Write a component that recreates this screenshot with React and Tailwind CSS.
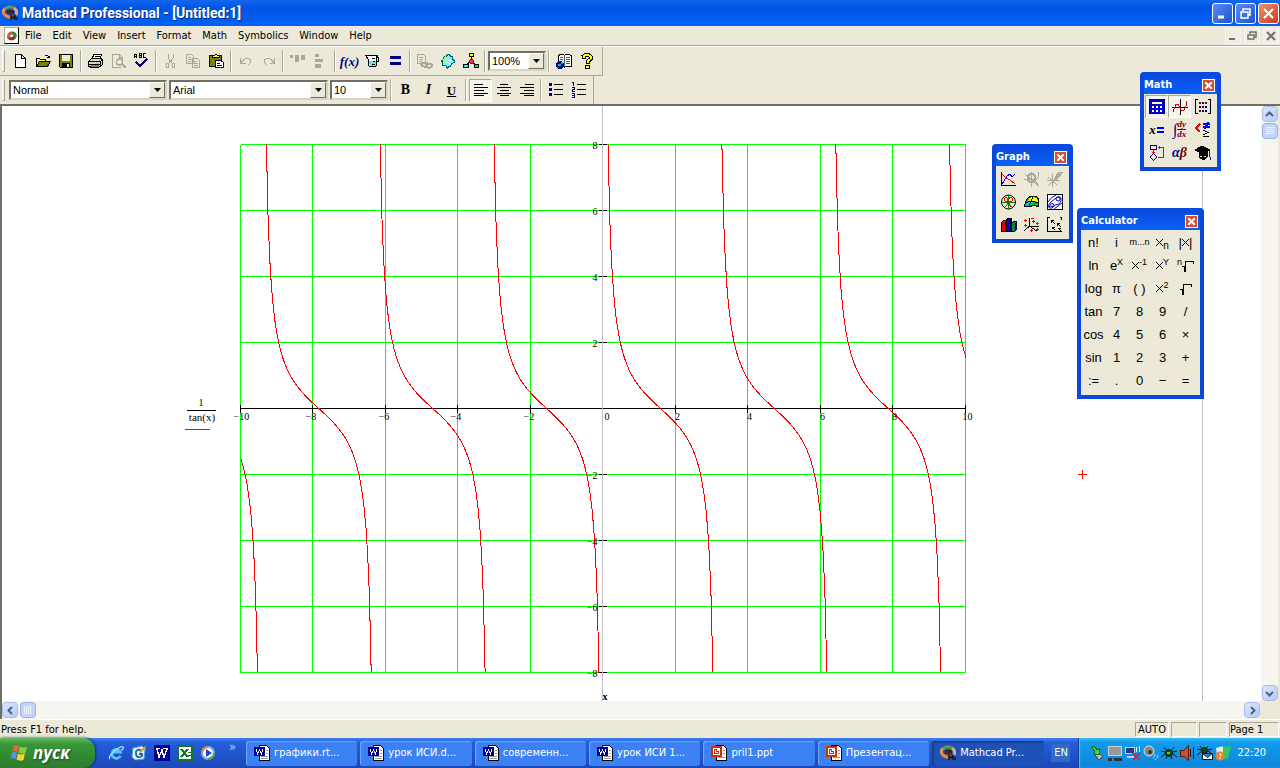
import { useState } from 'react';

const UI_FONT = "font-['DejaVu_Sans_Condensed','DejaVu_Sans',sans-serif]";

function Icon({ children, size = 16 }) {
  return (
    <svg width={size} height={size} viewBox="0 0 16 16" fill="none" stroke="#000" strokeWidth="1" shapeRendering="crispEdges" aria-hidden="true" className="shrink-0">
      {children}
    </svg>
  );
}

const G = '#aca899';

function MathcadLogo() {
  return (
    <svg width="16" height="16" viewBox="0 0 16 16" fill="none" aria-hidden="true" className="shrink-0">
      <path d="M5 5h7v4H5z" fill="#3a2418" />
      <path d="M2 9Q0 5 4 3" stroke="#e8935c" strokeWidth="3" />
      <path d="M3 4Q7 0 12 3" stroke="#5a9a58" strokeWidth="3" />
      <path d="M12 3Q16 6 14 10" stroke="#d8b080" strokeWidth="3" />
      <path d="M2 9Q5 13 11 12" stroke="#e88848" strokeWidth="3" />
      <path d="M4 7Q7 9 12 9" stroke="#5b2a14" strokeWidth="2" />
      <path d="M9 15V11l2 2 2-2v4M15 12v3" stroke="#141414" strokeWidth="1.5" />
    </svg>
  );
}

const icons = {
  new: <Icon><path d="M2.5 1.5h6l4 4v9h-10zM8.5 1.5v4h4" fill="#fff" /></Icon>,
  open: (
    <Icon>
      <path d="M0.5 13.5v-8h3l1 1h5v3" fill="#ffff66" />
      <path d="M0.5 13.5l3-5h11l-3 5z" fill="#808000" />
      <path d="M8.5 3.5q2-2 4 0v1M10.5 4.5h3v-2" />
    </Icon>
  ),
  save: (
    <Icon>
      <path d="M0.5 1.5h13v13h-12l-1-1z" fill="#808000" />
      <path d="M3 2h8v6H3z" fill="#ece9d8" stroke="none" />
      <path d="M3 10h8v5H3z" fill="#000" stroke="none" />
      <path d="M8 11h2v3H8z" fill="#ece9d8" stroke="none" />
    </Icon>
  ),
  print: (
    <Icon>
      <path d="M4.5 5.5l1-4h8l-2 5" fill="#fff" />
      <path d="M6.5 3.5h5M5.5 5.5h5" />
      <path d="M0.5 8.5l3-3h9l2 1v5l-2 2h-12z" fill="#ddd9c8" />
      <path d="M0 8.5h12v5M0 11.5h12M2 14.5h9M12.5 8.5l2-2" />
      <path d="M8 10h3" stroke="#e0d000" />
      <path d="M3 12h8v2H3z" fill="#777" stroke="none" />
    </Icon>
  ),
  preview: (
    <Icon>
      <path d="M1.5 14.5v-13h7l3 3v3M8.5 1.5v3h3M1.5 14.5h8" stroke={G} />
      <circle cx="8.5" cy="9" r="3" stroke={G} strokeWidth="1.5" />
      <path d="M11 11l4 4" stroke={G} strokeWidth="2" />
    </Icon>
  ),
  spell: (
    <Icon>
      <path d="M0.5 5V1.5h2V5M0 3.5h3M5.5 0v4.5h2v-4h-2M5 2.5h2M12 0.5H9.500v4H12" />
      <path d="M2 9l4 4 7-7" stroke="#000080" strokeWidth="2" />
    </Icon>
  ),
  cut: (
    <Icon>
      <path d="M5 1v4l5 6M10 1v4l-5 6" stroke={G} />
      <ellipse cx="4.5" cy="12.5" rx="1.5" ry="2" stroke={G} />
      <ellipse cx="10.5" cy="12.5" rx="1.5" ry="2" stroke={G} />
    </Icon>
  ),
  copy: (
    <Icon>
      <path d="M0.5 1.5h5l2 2v7h-7zM2 4.5h3M2 6.5h4M2 8.5h3M6.5 5.5h5l2 2v7h-7zM8 8.5h3M8 10.5h4M8 12.5h4" stroke={G} />
    </Icon>
  ),
  paste: (
    <Icon>
      <path d="M0.5 2.5h12v11h-12z" fill="#808000" />
      <path d="M3.5 4.5v-2h2l1-1h1l1 1h2v2z" fill="#ffff66" />
      <path d="M6.5 7.5h5l3 2v5h-8z" fill="#fff" stroke="#000080" />
      <path d="M8 10.5h3M8 12.5h5" stroke="#000080" />
    </Icon>
  ),
  undo: <Icon><path d="M2.5 5v5h5M3 9.5Q8 3 12 6.5q2 3-2 5.5" stroke={G} /></Icon>,
  redo: <Icon><path d="M13.5 5v5h-5M13 9.5Q8 3 4 6.5q-2 3 2 5.5" stroke={G} /></Icon>,
  alignAcross: <Icon><path d="M0 2h3v3H0zM5 2h4v7H5zM11 2h4v5h-4z" fill={G} stroke="none" /></Icon>,
  alignDown: <Icon><path d="M2 1h4v3H2zM2 6h8v3H2zM2 11h6v4H2z" fill={G} stroke="none" /></Icon>,
  units: (
    <Icon>
      <path d="M0.5 2.5h12l-1 2v8l-1 1h-6l-1-1v-6z" fill="#fff" />
      <path d="M4 8h7v4l-1 1H5z" fill="#5fe8e8" stroke="none" />
      <path d="M11.5 4.5h2v4h-2M7 5.5h3M8 8.5h2M7 11.5h3" />
    </Icon>
  ),
  equals: <Icon><path d="M2 3h11v3H2zM2 9h11v3H2z" fill="#000080" stroke="none" /></Icon>,
  link: (
    <Icon>
      <path d="M0.5 1.5h6l2 2v7h-8zM2 4.5h4M2 6.5h4M2 8.5h3" stroke={G} />
      <rect x="4.5" y="9.5" width="6" height="4" rx="2" stroke={G} strokeWidth="2" />
      <rect x="9" y="10.5" width="6" height="4" rx="2" stroke={G} strokeWidth="2" />
    </Icon>
  ),
  component: (
    <Icon>
      <path d="M3.5 3.5h3l1-2h2l1 2h2v3l2 1v2l-3 1-1 3h-2l-1 2-2-3h-3v-3l-1-2 2-1z" fill="#6ff" stroke="#006080" />
      <path d="M1 1l3 3M5 1v5M1 6h5M8 4l-3 3M3 8l2 2" stroke="#ffe000" />
      <path d="M8 7h4M9 10h2M7 9h2" stroke="#fff" />
    </Icon>
  ),
  tree: (
    <Icon>
      <path d="M8 4v4L3 12M8 8l5 4" />
      <rect x="6.5" y="0.5" width="4" height="3" fill="#ff0" />
      <circle cx="8.5" cy="8.5" r="2" fill="#f03050" stroke="#a00030" />
      <rect x="0.5" y="11.5" width="5" height="3" fill="#0ff" />
      <rect x="11.5" y="11.5" width="4" height="3" fill="#0f0" />
    </Icon>
  ),
  book: (
    <Icon>
      <path d="M2.5 2.5l2-1h3l1 1 1-1h3l3 1v11h-6l-1 1-1-1h-5z" fill="#fff" />
      <path d="M8.5 2v12M4 4.5h3M4 6.5h3M10 4.5h4M10 6.5h4M10 8.5h4M10 10.5h4" stroke="#555" />
      <circle cx="4" cy="12" r="3.5" fill="#0000d0" stroke="#000080" />
      <path d="M2 11h3v2H2zM5 9h2v2H5z" fill="#00d060" stroke="none" />
    </Icon>
  ),
  help: (
    <Icon>
      <path d="M4.5 6V3.5L6.500 2h3l2 1.500V6l-3 2.500V11" strokeWidth="4" />
      <path d="M4.5 5V3.5L6.500 2h3l2 1.500V6l-3 2.500V10" stroke="#ff0" strokeWidth="2" />
      <rect x="6.5" y="12.5" width="4" height="3" fill="#ff0" />
    </Icon>
  ),
  left: <Icon><path d="M1 2.5h9M1 5.5h14M1 8.5h10M1 11.5h14M1 13.5h10" /></Icon>,
  center: <Icon><path d="M4 2.5h8M1 5.5h14M4 8.5h9M1 11.5h14M4 13.5h9" /></Icon>,
  right: <Icon><path d="M6 2.5h9M1 5.5h14M5 8.5h10M1 11.5h14M5 13.5h10" /></Icon>,
  bullets: (
    <Icon>
      <path d="M1 1h3v3H1zM1 6h3v3H1zM1 11h3v3H1z" fill="#000080" stroke="none" />
      <path d="M6 2.5h9M6 7.5h9M6 12.5h9" />
    </Icon>
  ),
  numbers: (
    <Icon>
      <path d="M1 0.5h1.5V4M1 5.5h2.5v2h-2v2H4M1 11.5h2.5v4H1M1 13.5h2" stroke="#000080" />
      <path d="M6 2.5h9M6 7.5h9M6 12.5h9" />
    </Icon>
  ),
  calculator: (
    <Icon>
      <rect x="0.5" y="0.5" width="15" height="14" fill="#0000d8" stroke="#000080" />
      <path d="M3 3h10v2H3z" fill="#ffff80" stroke="none" />
      <path d="M3 7h2v2H3zM7 7h2v2H7zM11 7h2v2h-2zM3 11h2v2H3zM7 11h2v2H7zM11 11h2v2h-2z" fill="#fff" stroke="none" />
    </Icon>
  ),
  graph: (
    <Icon>
      <path d="M0 8.5h16M8.5 0v16" />
      <path d="M1 13l3-8h2l3 6h3l2-4V2" stroke="#e00000" />
    </Icon>
  ),
  matrix: (
    <Icon>
      <path d="M3 0.5H0.5v14H3M13 0.5h2.5v14H13" />
      <path d="M4 3h2v2H4zM10 3h2v2h-2zM7 7h2v2H7zM4 11h2v2H4z" fill="#800000" stroke="none" />
      <path d="M7 3h2v2H7zM4 7h2v2H4zM10 7h2v2h-2zM7 11h2v2H7zM10 11h2v2h-2z" fill="#000080" stroke="none" />
    </Icon>
  ),
  boolean: (
    <Icon>
      <path d="M5 2L1 6l4 4" stroke="#f00" strokeWidth="1.5" />
      <path d="M8 2h7M8 5h7M13 0l-3 7" stroke="#00f" strokeWidth="2" />
      <path d="M8 8l5 2.5L8 13M8 14.5h6" />
    </Icon>
  ),
  program: (
    <Icon>
      <rect x="1.5" y="0.5" width="6" height="4" stroke="#000080" />
      <path d="M4.5 8.5L8 12l-3.5 3.5L1 12z" stroke="#000080" />
      <path d="M4.5 5v3M9 12.5h5.5v-10H9M10.5 1v3M3 7.5h3" stroke="#f00" />
    </Icon>
  ),
  symbolic: (
    <Icon>
      <path d="M0 5l7-4 8 4-7 4z" fill="#000" />
      <path d="M4 8v4l3 2h3l2-2V8l-4 2z" fill="#000" />
      <path d="M5 11.5h2M9 11.5h2" stroke="#ece9d8" />
      <path d="M14.5 5v4l1 6" stroke="#00f" />
    </Icon>
  ),
  xyPlot: (
    <Icon>
      <path d="M0.5 1v13H15" />
      <path d="M1 13L6 5l3-2 2 3 3-3" stroke="#00f" />
      <path d="M1 3l4 4 4 2 5 4" stroke="#f00" />
    </Icon>
  ),
  zoom: (
    <Icon>
      <path d="M0 8.5h13M7.5 1v15M1 3l13 12" stroke={G} />
      <circle cx="7.5" cy="7" r="4" stroke={G} strokeWidth="2" />
      <path d="M14 1q2 5-3 9l4 5" stroke={G} />
    </Icon>
  ),
  trace: (
    <Icon>
      <path d="M0 9.5h13M5.5 3v13M1 6l9 8M10 6l-9 9" stroke={G} />
      <path d="M15 1L8 10M12 1l-4 7" stroke={G} strokeWidth="2" />
    </Icon>
  ),
  polar: (
    <Icon>
      <circle cx="7.5" cy="8" r="7" shapeRendering="auto" />
      <path d="M1 8.5h13M7.5 1v14" stroke="#008000" />
      <path d="M7 8Q2 8 4 4q3-2 3 4 1-6 4-4 2 4-4 4" stroke="#f00" />
      <path d="M7 8q-1 5-3 4M8 8q0 5 3 4" stroke="#f00" />
    </Icon>
  ),
  surface: (
    <Icon>
      <path d="M0 12l3-7 4-3 6 1 2 3-1 7-4-2-5 2z" fill="#00c000" />
      <path d="M5 4l3-1 5 1 1 4-4-1-6 1z" fill="#ff0" stroke="none" />
      <path d="M3 8l4-1 2 1-1 3-6 1z" fill="#00c8e0" stroke="none" />
      <path d="M2 9q5-3 12 0M5 13l4-11" />
    </Icon>
  ),
  contour: (
    <Icon>
      <rect x="0.5" y="0.5" width="15" height="15" fill="#fff" />
      <g stroke="#0000c0" shapeRendering="auto">
        <path d="M1 8Q4 3 9 1M1 12q1 3 4 2 3-4 7-4 3-3 2-6-2-3-5 0L4 8q-4 3-1 5M7 15l8-6" />
        <ellipse cx="11" cy="5" rx="2" ry="2" />
        <ellipse cx="5" cy="11" rx="2" ry="1.5" />
      </g>
    </Icon>
  ),
  bars: (
    <Icon>
      <path d="M0.5 5.5l2-2h3v11h-5z" fill="#f00000" />
      <path d="M5.5 2.5l2-1h3v13h-5z" fill="#0000f0" />
      <path d="M10.5 6.5l2-2h3v8l-2 2h-3z" fill="#008060" />
      <path d="M4.5 5v10M9.5 3v12M14.5 6v8" />
    </Icon>
  ),
  scatter: (
    <Icon>
      <path d="M5.5 1v8H15M5.5 9L0 14M5.5 9l7 5" />
      <path d="M0 3.5h3M1.5 2v3M8 4.5h3M9.5 3v3M12 6.5h3M13.5 5v3M0 8.5h3M1.5 7v3M6 13.5h3M7.5 12v3M7 1.5h3M12 12.5h3M13.5 11v3" stroke="#f00" />
    </Icon>
  ),
  vector: (
    <Icon>
      <path d="M0.5 0v14.5H15M0 0.5h3M13 0.5h1.5V3" />
      <path d="M4 3.5h3M4.5 3v3M4 3l4 4M10 6.5h3M10.5 6v3M10 6l4 4M5 10.5h3M5.5 10v2M5 10l3 3M11 11.5h3M11 11l3 3" />
    </Icon>
  ),
  ie: (
    <svg width="16" height="16" viewBox="0 0 18 18" fill="none" aria-hidden="true">
      <path d="M14 12a5 5 0 1 1 0-4H5" stroke="#58c4f8" strokeWidth="3" />
      <path d="M2 16Q0 13 7 7t10-5q1 2-2 4" stroke="#9ee4ff" strokeWidth="1.5" />
    </svg>
  ),
  desktop: (
    <svg width="16" height="16" viewBox="0 0 16 16" fill="none" aria-hidden="true">
      <path d="M2 3l9-2 3 3-1 10-9 1-3-3z" fill="#e6f2fb" stroke="#54a0d8" />
      <path d="M10 5Q4 4 5 9t6 2V9H8" stroke="#1470b8" strokeWidth="2" />
      <path d="M8 7l6-6 1 2-5 5z" fill="#f09a28" />
    </svg>
  ),
  player: (
    <svg width="16" height="16" viewBox="0 0 16 16" fill="none" aria-hidden="true">
      <circle cx="8" cy="8" r="6" fill="#f6f8ff" stroke="#8aa8e8" strokeWidth="2" />
      <path d="M2 8a6 6 0 0 1 6-6" stroke="#f08030" strokeWidth="2" />
      <path d="M8 14a6 6 0 0 0 6-6" stroke="#40b040" strokeWidth="2" />
      <path d="M6 4l6 4-6 4z" fill="#1b4bc0" />
    </svg>
  ),
  word: (
    <Icon>
      <rect width="16" height="16" fill="#000090" stroke="none" />
      <path d="M2 3.5h4M9 3.5h5M3 4l2 8 3-7 2 7 3-8" stroke="#fff" strokeWidth="1.5" />
    </Icon>
  ),
  excel: (
    <Icon>
      <rect width="16" height="16" fill="#107828" stroke="none" />
      <rect x="2" y="2" width="12" height="12" fill="#fff" stroke="none" />
      <path d="M4 4l7 8M11 4l-7 8" stroke="#107828" strokeWidth="2" />
      <path d="M11 7.5h3M11 10.5h3" stroke="#107828" />
    </Icon>
  ),
  wordDoc: (
    <Icon>
      <path d="M5.5 0.5h7l3 3v12h-10z" fill="#fff" />
      <path d="M7 11.5h7M7 13.5h7M12 5.5h2M12 8.5h2" stroke="#999" />
      <rect y="2" width="11" height="9" fill="#000090" stroke="none" />
      <path d="M2 4l1.5 5 2-4 2 4L9 4" stroke="#fff" />
    </Icon>
  ),
  pptDoc: (
    <Icon>
      <path d="M5.5 0.5h7l3 3v12h-10z" fill="#fff" />
      <path d="M7 12.5h7M12 5.5h2M12 8.5h2" stroke="#999" />
      <rect x="1" y="2" width="9" height="9" fill="#fff" stroke="#d03000" strokeWidth="2" />
      <path d="M5.5 4.5h-2v4h4v-2h-2z" stroke="#d03000" />
    </Icon>
  ),
  mathcad: <MathcadLogo />,
};

const textIcons = {
  fx: <span className="font-['Liberation_Serif',serif] text-[13px] font-bold italic text-[#000080]">f(x)</span>,
  bold: <span className="font-['Liberation_Serif',serif] text-[14px] font-black">B</span>,
  italic: <span className="font-['Liberation_Serif',serif] text-[14px] font-bold italic">I</span>,
  underline: <span className="font-['Liberation_Serif',serif] text-[13px] font-bold underline underline-offset-1">U</span>,
  evaluate: (
    <span className="flex items-center gap-px font-['Liberation_Serif',serif] text-[13px] font-bold italic">
      x
      <svg width="7" height="6" viewBox="0 0 7 6" aria-hidden="true"><path d="M0 0h7v2H0zM0 4h7v2H0z" fill="#00f" /></svg>
    </span>
  ),
  greek: <span className="font-['Liberation_Serif',serif] text-[14px] font-bold italic text-[#000080]">α<span className="text-[#800000]">β</span></span>,
  calculus: (
    <span className="flex items-center font-['Liberation_Serif',serif] font-bold italic leading-none text-[#800000]">
      <span className="text-[16px] font-normal text-[#000080]">∫</span>
      <span className="flex flex-col text-[9px] leading-none">
        <span className="border-b border-[#800000]">dy</span>
        <span>dx</span>
      </span>
    </span>
  ),
};

function ToolButton({ name, label, pressed }) {
  return (
    <button
      type="button"
      aria-label={label}
      className={`flex size-[23px] shrink-0 items-center justify-center leading-none ${pressed ? 'border border-b-white border-l-[#aca899] border-r-white border-t-[#aca899] bg-[#f6f4ec]' : ''}`}
    >
      {icons[name] || textIcons[name]}
    </button>
  );
}

const Separator = () => <span className="mx-0.5 h-[22px] w-0.5 shrink-0 border-l border-r border-l-[#aca899] border-r-white" />;
const Grip = () => <span className="mr-1 h-[22px] w-[3px] shrink-0 border border-b-[#aca899] border-l-white border-r-[#aca899] border-t-white" />;

function Combo({ label, options, className }) {
  return (
    <div className={`flex h-5 shrink-0 border-2 border-b-[#d8d4c4] border-l-[#716f64] border-r-[#d8d4c4] border-t-[#716f64] bg-white ${className}`}>
      <select aria-label={label} className="min-w-0 flex-1 appearance-none bg-white pl-0.5 font-['Liberation_Sans',sans-serif] text-[11px] leading-4 outline-none">
        {options.map(o => <option key={o}>{o}</option>)}
      </select>
      <span className="flex w-4 items-center justify-center border border-b-[#716f64] border-l-white border-r-[#716f64] border-t-white bg-[#ece9d8]">
        <svg width="7" height="4" viewBox="0 0 7 4" aria-hidden="true"><path d="M0 0h7L3.5 4z" /></svg>
      </span>
    </div>
  );
}

const standardBar = [
  ['new', 'New'], ['open', 'Open'], ['save', 'Save'], null,
  ['print', 'Print'], ['preview', 'Print Preview'], ['spell', 'Check Spelling'], null,
  ['cut', 'Cut'], ['copy', 'Copy'], ['paste', 'Paste'], null,
  ['undo', 'Undo'], ['redo', 'Redo'], null,
  ['alignAcross', 'Align Across'], ['alignDown', 'Align Down'], null,
  ['fx', 'Insert Function'], ['units', 'Insert Unit'], ['equals', 'Calculate'], null,
  ['link', 'Insert Hyperlink'], ['component', 'Component Wizard'], ['tree', 'Run MathConnex'], null,
];

function WindowButton({ label, close, children }) {
  return (
    <button type="button" aria-label={label} className={`flex size-[21px] items-center justify-center rounded-[3px] border border-white ${close ? 'bg-linear-to-br from-[#f0906c] to-[#c83814]' : 'bg-linear-to-br from-[#5c8cf4] to-[#1c50d0]'}`}>
      <svg width="13" height="13" viewBox="0 0 13 13" fill="none" stroke="#fff" strokeWidth="2" aria-hidden="true">{children}</svg>
    </button>
  );
}

function TitleBar() {
  return (
    <header className="flex h-[26px] shrink-0 items-center bg-linear-to-b from-[#1468ee] via-[#0054e3] via-30% to-[#0062fa] pl-0.5 pr-px">
      <MathcadLogo />
      <h1 className="ml-1 flex-1 truncate font-['Roboto','Open_Sans',sans-serif] text-[14px] font-bold leading-5 text-white [text-shadow:1px_1px_#0a2a80]">Mathcad Professional - [Untitled:1]</h1>
      <div className="flex gap-0.5">
        <WindowButton label="Minimize"><path d="M2 10h6" strokeWidth="3" /></WindowButton>
        <WindowButton label="Restore"><path d="M4 4V2h7v6H9M2 5h7v6H2z" strokeWidth="1.5" /></WindowButton>
        <WindowButton label="Close" close><path d="M2 2l9 9M11 2l-9 9" /></WindowButton>
      </div>
    </header>
  );
}

const menus = ['File', 'Edit', 'View', 'Insert', 'Format', 'Math', 'Symbolics', 'Window', 'Help'];

function MdiButton({ label, children }) {
  return (
    <button type="button" aria-label={label} className="flex size-4 items-center justify-center border border-[#f8f6ee] bg-[#f0eee2]">
      <svg width="10" height="10" viewBox="0 0 10 10" fill="none" stroke="#716f64" strokeWidth="2" aria-hidden="true">{children}</svg>
    </button>
  );
}

function MenuBar() {
  return (
    <nav className="flex h-5 shrink-0 items-center border-b border-[#aca899] pl-1 pr-px">
      <span className="flex h-[17px] w-[15px] items-center justify-center border border-b-black border-l-[#aca899] border-r-black border-t-[#aca899] bg-white">
        <svg width="10" height="10" viewBox="0 0 16 16" fill="none" strokeWidth="5" aria-hidden="true">
          <path d="M3 12Q1 4 8 3" stroke="#d8602c" />
          <path d="M8 3q6 1 5 6" stroke="#3f7a48" />
          <path d="M3 11q5 4 10-2" stroke="#70402c" />
        </svg>
      </span>
      {menus.map(m => (
        <button key={m} type="button" className="pl-[6px] pr-[5px] text-[11px] leading-4">{m}</button>
      ))}
      <div className="ml-auto flex gap-[3px]">
        <MdiButton label="Minimize document"><path d="M1 8h6" /></MdiButton>
        <MdiButton label="Restore document"><path d="M3 3V1h6v5H7M1 4h6v4H1z" strokeWidth="1.5" /></MdiButton>
        <MdiButton label="Close document"><path d="M1 1l8 8M9 1L1 9" /></MdiButton>
      </div>
    </nav>
  );
}

function Toolbars() {
  return (
    <div className="shrink-0 border-b-2 border-b-[#716f64] border-t border-t-white">
      <div className="flex h-[29px] w-fit items-center border-b border-r border-[#aca899] pl-0.5">
        <Grip />
        {standardBar.map((b, i) => (b ? <ToolButton key={b[0]} name={b[0]} label={b[1]} /> : <Separator key={i} />))}
        <Combo label="Zoom" options={['100%', '75%', '50%']} className="w-[58px]" />
        <Separator />
        <ToolButton name="book" label="Resource Center" />
        <ToolButton name="help" label="Help" />
        <span className="w-1" />
      </div>
      <div className="flex h-7 w-fit items-center border-r border-[#aca899] pl-0.5">
        <Grip />
        <div className="flex gap-0.5">
          <Combo label="Style" options={['Normal', 'Title']} className="w-[158px]" />
          <Combo label="Font" options={['Arial', 'Times New Roman']} className="w-[159px]" />
          <Combo label="Font size" options={['10', '12', '14']} className="w-[58px]" />
        </div>
        <Separator />
        <ToolButton name="bold" label="Bold" />
        <ToolButton name="italic" label="Italic" />
        <ToolButton name="underline" label="Underline" />
        <Separator />
        <ToolButton name="left" label="Align Left" pressed />
        <ToolButton name="center" label="Center" />
        <ToolButton name="right" label="Align Right" />
        <Separator />
        <ToolButton name="bullets" label="Bullets" />
        <ToolButton name="numbers" label="Numbering" />
        <span className="w-[3px]" />
      </div>
    </div>
  );
}

// plot geometry
const CX = 420.5;
const CY = 271.5;
const UX = 36.25;
const UY = 33;
const px = x => Math.floor(CX + x * UX) + 0.5;
const py = y => CY - y * UY;

function cotangentPath() {
  let d = '';
  for (let n = -4; n <= 3; n++) {
    const start = Math.max(-10, n * Math.PI + Math.atan(1 / 8));
    const end = Math.min(10, (n + 1) * Math.PI - Math.atan(1 / 8));
    if (end <= start) continue;
    for (let i = 0; i <= 60; i++) {
      const x = start + ((end - start) * i) / 60;
      d += `${i ? 'L' : 'M'}${Math.min(px(10), CX + 1 + x * UX).toFixed(1)} ${py(1 / Math.tan(x)).toFixed(1)}`;
    }
  }
  return d;
}

const xTicks = [-10, -8, -6, -4, -2, 2, 4, 6, 8, 10];
const yTicks = [-8, -6, -4, -2, 2, 4, 6, 8];

function Plot() {
  return (
    <svg width="800" height="564" viewBox="0 0 800 564" fill="none" shapeRendering="crispEdges" role="img" aria-label="Graph of 1/tan(x)" className="absolute left-[180px] top-[31px]">
      <g stroke="#00ff00">
        {xTicks.map(x => <path key={x} d={`M${px(x)} ${py(8)}V${py(-8)}`} />)}
        {yTicks.map(y => <path key={y} d={`M${px(-10)} ${py(y)}H${px(10)}`} />)}
      </g>
      <path d={`M${px(-10)} ${CY}H${px(10)}`} stroke="#000" />
      <g stroke="#000">
        {xTicks.map(x => <path key={x} d={`M${px(x)} ${CY - 4}v8`} />)}
        {yTicks.map(y => <path key={y} d={`M${CX - 4} ${py(y)}h8`} />)}
        <path d={`M${CX - 4} ${CY}h8`} />
      </g>
      <path d={`M${CX} 0V564`} stroke="#c0c0c0" />
      <path d={cotangentPath()} stroke="#ff0000" />
      <g fill="#000" className="font-['Liberation_Serif',serif] text-[10px]" shapeRendering="auto">
        {xTicks.map(x => (
          <text key={x} x={px(x) + (x < 0 ? -7 : 2)} y={CY + 11} textAnchor={x < 0 ? 'start' : 'middle'}>{String(x).replace('-', '−')}</text>
        ))}
        <text x={CX + 2} y={CY + 11}>0</text>
        {yTicks.map(y => <text key={y} x={CX - 5} y={py(y) + 4} textAnchor="end">{String(y).replace('-', '−')}</text>)}
        <text x={CX} y="563" className="font-bold">x</text>
        <text x="19" y="269" textAnchor="middle">1</text>
        <text x="20" y="284" textAnchor="middle" className="text-[11px]">tan(x)</text>
      </g>
      <path d="M5 273.5h29" stroke="#000" />
      <path d="M3 292.5h25" stroke="#ff0000" />
    </svg>
  );
}

function ScrollButton({ label, d }) {
  return (
    <button type="button" aria-label={label} className="flex size-4 shrink-0 items-center justify-center rounded-sm border border-[#a8bcf0] bg-linear-to-br from-[#dce6ff] to-[#b6caf8]">
      <svg width="9" height="9" viewBox="0 0 9 9" fill="none" stroke="#4d6185" strokeWidth="2" aria-hidden="true"><path d={d} /></svg>
    </button>
  );
}

function ScrollThumb({ d }) {
  return (
    <span className="flex size-4 shrink-0 items-center justify-center rounded-sm border border-[#98b0e8] bg-[#c4d4fc]">
      <svg width="8" height="8" viewBox="0 0 8 8" stroke="#eef4fe" shapeRendering="crispEdges" aria-hidden="true"><path d={d} /></svg>
    </span>
  );
}

function Worksheet() {
  return (
    <main className="flex min-h-0 flex-1 flex-col border-l-2 border-[#716f64]">
      <div className="flex min-h-0 flex-1">
        <div className="relative min-w-0 flex-1 overflow-hidden bg-white">
          <span className="absolute inset-y-0 left-[600px] w-px bg-[#c0c0c0]" />
          <span className="absolute inset-y-0 left-[1200px] w-px bg-[#c0c0c0]" />
          <Plot />
          <svg width="9" height="9" viewBox="0 0 9 9" stroke="#f00" shapeRendering="crispEdges" className="absolute left-[1076px] top-[364px]" aria-hidden="true"><path d="M0 4.5h9M4.5 0v9" /></svg>
        </div>
        <div className="flex w-[17px] flex-col items-center gap-px bg-[#f6f5f0]">
          <ScrollButton label="Scroll up" d="M1 6l3.5-3.5L8 6" />
          <ScrollThumb d="M0 0.5h8M0 2.5h8M0 4.5h8M0 6.5h8" />
          <span className="flex-1" />
          <ScrollButton label="Scroll down" d="M1 3l3.5 3.5L8 3" />
        </div>
        <span className="w-0.5" />
      </div>
      <div className="flex h-[18px] shrink-0 items-center">
        <div className="flex h-full flex-1 items-center gap-0.5 bg-[#f6f5f0]">
          <ScrollButton label="Scroll left" d="M6 1L2.5 4.5 6 8" />
          <ScrollThumb d="M0.5 0v8M2.5 0v8M4.5 0v8M6.5 0v8" />
          <span className="flex-1" />
          <ScrollButton label="Scroll right" d="M3 1l3.5 3.5L3 8" />
        </div>
        <span className="w-5" />
      </div>
    </main>
  );
}

function Palette({ title, className, gridClass, children }) {
  const [open, setOpen] = useState(true);
  if (!open) return null;
  return (
    <section className={`absolute rounded-t-sm border-x-4 border-b-4 border-[#0a48dc] bg-[#ece9d8] ${className}`}>
      <div className="flex h-[22px] items-center justify-between bg-linear-to-b from-[#0a48dc] to-[#0a60f8] pt-1">
        <h2 className="text-[11px] font-bold leading-4 text-white">{title}</h2>
        <button type="button" aria-label={`Close ${title}`} onClick={() => setOpen(false)} className="mr-0.5 flex size-[13px] items-center justify-center border border-white bg-[#dc5030]">
          <svg width="7" height="7" viewBox="0 0 7 7" stroke="#fff" strokeWidth="2" aria-hidden="true"><path d="M0 0l7 7M7 0L0 7" /></svg>
        </button>
      </div>
      <div className={`grid pb-[3px] pl-px pr-[3px] pt-px ${gridClass}`}>{children}</div>
    </section>
  );
}

const mathTools = [
  ['calculator', 'Calculator', true], ['graph', 'Graph', true], ['matrix', 'Matrix'],
  ['evaluate', 'Evaluation'], ['calculus', 'Calculus'], ['boolean', 'Boolean'],
  ['program', 'Programming'], ['greek', 'Greek'], ['symbolic', 'Symbolic'],
];

const graphTools = [
  ['xyPlot', 'X-Y Plot'], ['zoom', 'Zoom'], ['trace', 'Trace'],
  ['polar', 'Polar Plot'], ['surface', 'Surface Plot'], ['contour', 'Contour Plot'],
  ['bars', '3D Bar Plot'], ['scatter', '3D Scatter Plot'], ['vector', 'Vector Field Plot'],
];

const Sup = ({ children }) => <span className="self-start text-[9px] leading-[8px]">{children}</span>;
const Sub = ({ children }) => <span className="self-end text-[10px] leading-[8px]">{children}</span>;
const Root = () => <svg width="12" height="12" viewBox="0 0 12 12" fill="none" stroke="#000" shapeRendering="crispEdges" aria-hidden="true"><path d="M0 6.5h2.5v5h1V1.5h8V4" /></svg>;
const X = () => <svg width="7" height="7" viewBox="0 0 7 7" stroke="#000" aria-hidden="true"><path d="M0 0l7 7M7 0L0 7" /></svg>;

const calcKeys = [
  ['factorial', 'n!'], ['imaginary', 'i'], ['range', <span className="text-[9px]">m...n</span>], ['subscript', <><X /><Sub>n</Sub></>], ['absolute', <>|<X />|</>],
  ['ln', 'ln'], ['exp', <>e<Sup>X</Sup></>], ['inverse', <><X /><Sup>-1</Sup></>], ['power', <><X /><Sup>Y</Sup></>], ['nth root', <><Sup>n</Sup><Root /></>],
  ['log', 'log'], ['pi', 'π'], ['parentheses', '( )'], ['square', <><X /><Sup>2</Sup></>], ['square root', <Root />],
  ['tan', 'tan'], ['7', '7'], ['8', '8'], ['9', '9'], ['divide', '/'],
  ['cos', 'cos'], ['4', '4'], ['5', '5'], ['6', '6'], ['multiply', '×'],
  ['sin', 'sin'], ['1', '1'], ['2', '2'], ['3', '3'], ['plus', '+'],
  ['define', ':='], ['point', '.'], ['0', '0'], ['minus', '−'], ['equals', '='],
];

function StatusBar() {
  const cell = 'h-[15px] border border-b-white border-l-[#aca899] border-r-white border-t-[#aca899]';
  return (
    <footer className="flex h-[19px] shrink-0 items-center gap-0.5 border-t border-white pl-px pr-px pt-px text-[11px] leading-[14px]">
      <span className="flex-1">Press F1 for help.</span>
      <span className={`${cell} w-[34px] text-center`}>AUTO</span>
      <span className={`${cell} w-[26px]`} />
      <span className={`${cell} w-7`} />
      <span className={`${cell} w-[50px]`}>Page 1</span>
    </footer>
  );
}

const quickLaunch = [['ie', 'Internet Explorer'], ['desktop', 'Outlook Express'], ['word', 'Word'], ['excel', 'Excel'], ['player', 'Media Player']];

const tasks = [
  ['wordDoc', 'графики.rt...'],
  ['wordDoc', 'урок ИСИ.d...'],
  ['wordDoc', 'современн...'],
  ['wordDoc', 'урок ИСИ 1...'],
  ['pptDoc', 'pril1.ppt'],
  ['pptDoc', 'Презентац...'],
  ['mathcad', 'Mathcad Pr...', true],
];

const trayIcons = [
  <Icon key="usb"><path d="M5 9l4-2 5 5-4 3z" fill="#b8bcc0" stroke="#555" /><path d="M2 1h3l3 4 2-1v5H5l1-2z" fill="#50d050" stroke="#187018" /></Icon>,
  <Icon key="display"><rect x="1.5" y="1.5" width="13" height="9" fill="#9a9a9a" stroke="#ccc" /><path d="M1 14h4M7 14h8" stroke="#333" strokeWidth="3" /></Icon>,
  <Icon key="network"><rect x="0.5" y="2.5" width="9" height="6" fill="#203880" stroke="#ccd" /><path d="M2 11.5h7" stroke="#ccd" strokeWidth="2" /><path d="M11.5 2v5M14.5 1v8" stroke="#dff" /><path d="M8 8l7 7M15 8l-7 7" stroke="#f02020" strokeWidth="2" /></Icon>,
  <svg key="speaker" width="16" height="16" viewBox="0 0 16 16" fill="none" aria-hidden="true"><circle cx="6" cy="6" r="5" fill="#888" stroke="#ddd" /><circle cx="7" cy="7" r="2" fill="#333" /><path d="M10 13q2-1 2-4M12 15q3-2 3-5" stroke="#a8d8ff" /></svg>,
  <svg key="bug" width="16" height="16" viewBox="0 0 16 16" fill="none" stroke="#101810" aria-hidden="true"><path d="M3 2l2 3M13 2l-2 3M0 6l4 1M16 6l-4 1M0 12l4-3M16 12l-4-3M5 14l1-3M11 14l-1-3" /><circle cx="8" cy="8" r="3.5" fill="#184818" /><path d="M6 7h3v2H6z" fill="#30e030" stroke="none" /></svg>,
  <Icon key="volume"><path d="M1 5h4l4-4v14l-4-4H1z" fill="#c85030" stroke="#601808" /><path d="M11.5 4v8M14.5 2v12" stroke="#401008" /></Icon>,
  <svg key="mail" width="16" height="16" viewBox="0 0 16 16" fill="none" stroke="#101810" aria-hidden="true"><path d="M3 1l2 3M11 1l-2 3M0 4l4 1M15 4l-4 1M0 10l4-3M14 8l-3-2" /><circle cx="7.5" cy="5.5" r="3" fill="#184818" /><path d="M5.5 8.5h10v6h-10zM5.5 8.5l5 4 5-4" fill="#fff" /></svg>,
  <svg key="update" width="16" height="16" viewBox="0 0 16 16" aria-hidden="true"><path d="M1 3l7-2v12l-6-2z" fill="#dcece8" /><path d="M8 2l8-1-3 12-5 2z" fill="#30c850" /><circle cx="5" cy="11" r="4.5" fill="#f08030" /><path d="M4 9h2v2H5M5 12v2" stroke="#fff" fill="none" /></svg>,
];

function Taskbar() {
  return (
    <div className="flex h-[30px] shrink-0 items-center bg-linear-to-b from-[#3c80f0] via-[#245edb] via-15% to-[#1c48b8] text-white">
      <button type="button" className="flex h-full w-[95px] items-center gap-1 rounded-r-xl bg-linear-to-b from-[#68b860] via-[#389838] via-20% to-[#2c7c2c] pl-2.5 shadow-[1px_0_3px_#10307c]">
        <svg width="19" height="18" viewBox="0 0 19 18" aria-hidden="true">
          <path d="M4 2q3-2 5 0L7.5 8q-3-2-5 0z" fill="#f06030" />
          <path d="M10 2.5q3 2 7 0L15.5 9q-3 1.5-7-0.5z" fill="#80d040" />
          <path d="M2 9q3-2 5 0l-1.5 6q-3-2-5 0z" fill="#5090f8" />
          <path d="M8 9.5q3 2 7 0L13.5 16q-3 1.5-7-0.5z" fill="#fcd030" />
        </svg>
        <span className="font-['Open_Sans','Noto_Sans',sans-serif] text-[17px] font-bold italic leading-6 [text-shadow:1px_1px_2px_#184818]">пуск</span>
      </button>
      <div className="flex items-center pl-[9px]">
        {quickLaunch.map(([icon, label]) => (
          <button key={icon} type="button" aria-label={label} className="flex size-[23px] items-center justify-center">{icons[icon]}</button>
        ))}
        <button type="button" aria-label="More" className="w-[27px] pb-3 text-[13px] leading-4 text-[#bcd4ff]">»</button>
      </div>
      <div className="flex min-w-0 flex-1 gap-[3px]">
        {tasks.map(([icon, label, active]) => (
          <button
            key={label}
            type="button"
            className={`flex h-[25px] min-w-0 max-w-[160px] flex-1 items-center gap-1 rounded-[3px] pl-2 text-[11px] leading-4 ${active ? 'bg-[#1e52b7] shadow-[inset_1px_1px_2px_#10306c]' : 'bg-[#3c81f3] shadow-[inset_1px_1px_1px_#70a8fc]'}`}
          >
            {icons[icon]}
            <span className="truncate">{label}</span>
          </button>
        ))}
      </div>
      <span className="mx-2 w-[19px] bg-[#316ac5] text-center text-[11px] leading-[18px]">EN</span>
      <div className="flex h-full items-center gap-0.5 border-l border-[#0a3c98] bg-linear-to-b from-[#30b8f8] via-[#129cec] via-15% to-[#0f84d8] pl-2.5 pr-3.5 shadow-[inset_1px_0_1px_#50c8ff]">
        {trayIcons}
        <time className="ml-1 text-[11px] leading-4">22:20</time>
      </div>
    </div>
  );
}

export default function App() {
  return (
    <div className={`relative flex h-screen flex-col overflow-hidden bg-[#ece9d8] text-black ${UI_FONT}`}>
      <TitleBar />
      <MenuBar />
      <Toolbars />
      <Worksheet />
      <StatusBar />
      <Taskbar />

      <Palette title="Math" className="left-[1140px] top-[72px]" gridClass="grid-cols-[repeat(3,23px)]">
        {mathTools.map(([name, label, pressed]) => <ToolButton key={name} name={name} label={label} pressed={pressed} />)}
      </Palette>
      <Palette title="Graph" className="left-[992px] top-[144px]" gridClass="grid-cols-[repeat(3,23px)]">
        {graphTools.map(([name, label]) => <ToolButton key={name} name={name} label={label} />)}
      </Palette>
      <Palette title="Calculator" className="left-[1077px] top-[208px]" gridClass="grid-cols-[repeat(5,23px)]">
        {calcKeys.map(([name, face]) => (
          <button key={name} type="button" aria-label={name} className="flex size-[23px] items-center justify-center whitespace-nowrap font-['Liberation_Sans',sans-serif] text-[13px] leading-[15px]">
            <span className="flex h-[15px] items-center whitespace-pre">{face}</span>
          </button>
        ))}
      </Palette>
    </div>
  );
}
